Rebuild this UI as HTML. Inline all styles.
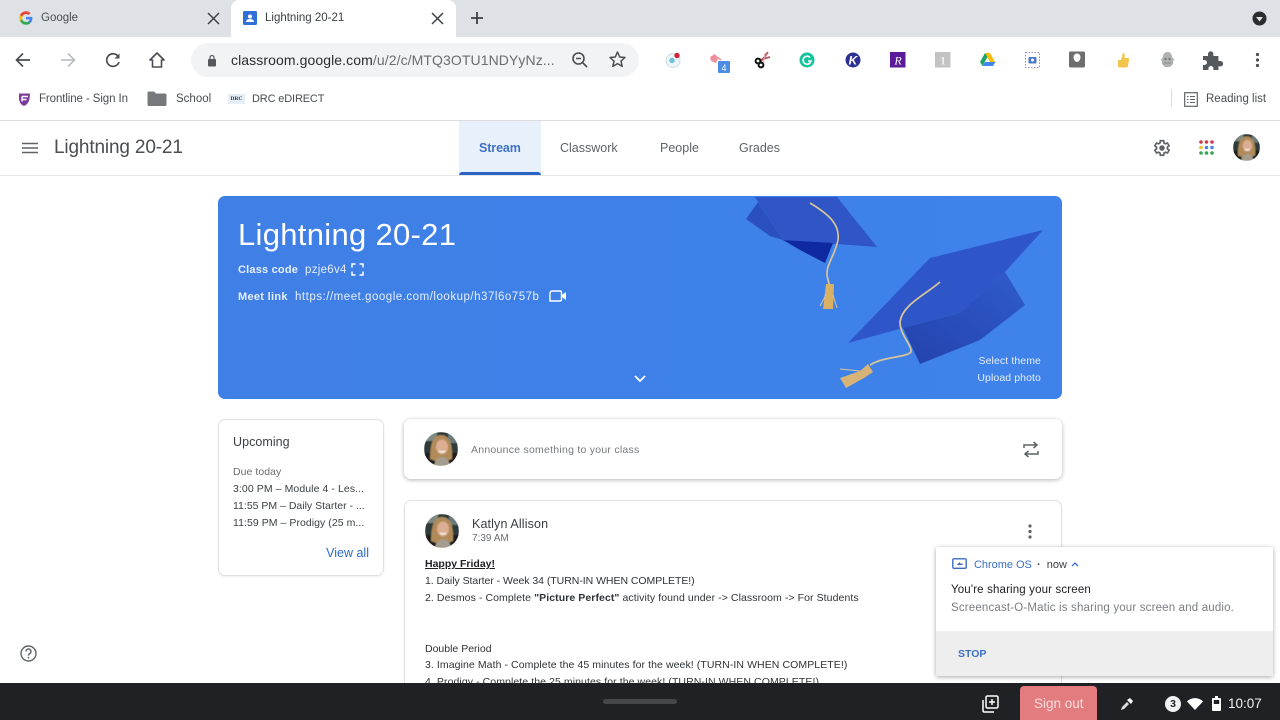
<!DOCTYPE html>
<html><head><meta charset="utf-8"><style>
html,body{margin:0;padding:0;width:1280px;height:720px;overflow:hidden;background:#fff;font-family:"Liberation Sans",sans-serif;color:#3c4043}
#root{position:absolute;left:0;top:0;width:1280px;height:720px;overflow:hidden;background:#fff}
.a{position:absolute;white-space:nowrap;line-height:1}
svg{position:absolute;overflow:visible}
</style></head><body><div id="root">
<svg width="0" height="0" style="position:absolute"><defs>
<filter id="bl"><feGaussianBlur stdDeviation=".6"/></filter>
<linearGradient id="flap" x1="0" y1="1" x2="1" y2="0"><stop offset="0" stop-color="#2342ac"/><stop offset="1" stop-color="#2f5ccb"/></linearGradient>
<symbol id="av" viewBox="0 0 34 34">
<clipPath id="cc"><circle cx="17" cy="17" r="17"/></clipPath>
<g clip-path="url(#cc)"><g filter="url(#bl)"><rect width="34" height="34" fill="#2f3a38"/><rect x="0" y="0" width="13" height="9" fill="#7c8a82"/><rect x="24" y="2" width="10" height="9" fill="#6b7a7c"/><rect x="0" y="21" width="34" height="13" fill="#1d1f1d"/>
<path d="M6 27C6 10 10 3 17 3s12 6 11 24l-5 2H11z" fill="#b08a58"/><ellipse cx="18" cy="15" rx="6" ry="7.500" fill="#dcae92"/><path d="M10 34c1-7 5-9 8-9s7 2 8 9z" fill="#a59c90"/><path d="M15 19q3 2 6 0" stroke="#fff" stroke-width="1.300" fill="none"/></g></g>
</symbol></defs></svg>

<!-- tab strip -->
<div class="a" style="left:0;top:0;width:1280px;height:37px;background:#dee1e6"></div>
<div class="a" style="left:231px;top:0;width:225px;height:38px;background:#fff;border-radius:8px 8px 0 0"></div>
<svg style="left:19px;top:11px" width="14" height="14" viewBox="0 0 24 24"><path d="M23 12.300c0-.8-.1-1.600-.2-2.300H12v4.400h6.200c-.3 1.400-1.100 2.600-2.300 3.400v2.800h3.700c2.200-2 3.400-5 3.400-8.300z" fill="#4285f4"/><path d="M12 23.500c3.100 0 5.700-1 7.600-2.800l-3.700-2.900c-1 .7-2.300 1.100-3.900 1.100-3 0-5.500-2-6.400-4.700H1.800v2.900c1.900 3.800 5.800 6.400 10.200 6.400z" fill="#34a853"/><path d="M5.600 14.200c-.5-1.400-.5-3 0-4.400V6.900H1.800c-1.600 3.200-1.600 7 0 10.200z" fill="#fbbc05"/><path d="M12 5.100c1.700 0 3.200.6 4.400 1.700l3.300-3.300C17.700 1.600 15.100.5 12 .5 7.600.5 3.700 3.100 1.800 6.900l3.800 2.900c.9-2.700 3.400-4.700 6.400-4.700z" fill="#ea4335"/></svg>
<div class="a" style="left:41px;top:13px;font-size:11.500px;color:#4a4d51">Google</div>
<svg style="left:207px;top:12px" width="13" height="13" viewBox="0 0 13 13"><path d="M1 1l11 11M12 1L1 12" stroke="#3c4043" stroke-width="1.500"/></svg>
<svg style="left:243px;top:11px" width="14" height="14" viewBox="0 0 14 14"><rect width="14" height="14" rx="1.500" fill="#2f6fd6"/><circle cx="7" cy="5.500" r="2" fill="#fff"/><path d="M3 11c0-2 2-3 4-3s4 1 4 3z" fill="#fff"/></svg>
<div class="a" style="left:265px;top:13px;font-size:11.500px;color:#3c4043">Lightning 20-21</div>
<svg style="left:431px;top:12px" width="13" height="13" viewBox="0 0 13 13"><path d="M1 1l11 11M12 1L1 12" stroke="#3c4043" stroke-width="1.500"/></svg>
<svg style="left:470px;top:11px" width="14" height="14" viewBox="0 0 14 14"><path d="M7 1v12M1 7h12" stroke="#3c4043" stroke-width="1.800"/></svg>
<svg style="left:1252px;top:11px" width="15" height="15" viewBox="0 0 15 15"><circle cx="7.500" cy="7.500" r="7" fill="#2a2c2e"/><path d="M4 6h7l-3.500 4.500z" fill="#dee1e6"/></svg>

<!-- toolbar -->
<svg style="left:14px;top:51px" width="18" height="18" viewBox="0 0 18 18"><path d="M16 9H3M9 2.500L2.500 9 9 15.500" stroke="#4a4d51" stroke-width="1.700" fill="none"/></svg>
<svg style="left:59px;top:51px" width="18" height="18" viewBox="0 0 18 18"><path d="M2 9h13M9 2.500L15.500 9 9 15.500" stroke="#b5b8bb" stroke-width="1.500" fill="none"/></svg>
<svg style="left:104px;top:51px" width="18" height="18" viewBox="0 0 18 18"><path d="M14.500 6A6.300 6.300 0 1 0 15 11" stroke="#4a4d51" stroke-width="1.700" fill="none"/><path d="M15.500 2.500v5h-5z" fill="#4a4d51"/></svg>
<svg style="left:148px;top:51px" width="18" height="18" viewBox="0 0 18 18"><path d="M9 2L2 9h2.500v7h9V9H16z" stroke="#4a4d51" stroke-width="1.600" fill="none" stroke-linejoin="round"/></svg>
<div class="a" style="left:191px;top:43px;width:448px;height:34px;background:#f1f3f4;border-radius:17px"></div>
<svg style="left:206px;top:54px" width="12" height="13" viewBox="0 0 12 13"><rect x="2" y="5" width="8" height="7.500" rx="1" fill="#55585c"/><path d="M4 5V3.500a2 2 0 0 1 4 0V5" stroke="#55585c" stroke-width="1.200" fill="none"/></svg>
<div class="a" style="left:231px;top:53px;font-size:14px;color:#2a2c2f;letter-spacing:.09px">classroom.google.com<span style="color:#6a6d71">/u/2/c/MTQ3OTU1NDYyNz...</span></div>
<svg style="left:571px;top:51px" width="18" height="18" viewBox="0 0 18 18"><circle cx="7.500" cy="7.500" r="5.500" stroke="#4a4d51" stroke-width="1.600" fill="none"/><path d="M11.500 11.500L16 16M5 7.500h5" stroke="#4a4d51" stroke-width="1.600"/></svg>
<svg style="left:608px;top:50px" width="19" height="19" viewBox="0 0 19 19"><path d="M9.500 2l2.200 5 5.300.5-4 3.600 1.200 5.300-4.700-2.800-4.700 2.800 1.200-5.300-4-3.600 5.300-.5z" stroke="#4a4d51" stroke-width="1.500" fill="none" stroke-linejoin="round"/></svg>

<!-- extensions -->
<svg style="left:664px;top:51px" width="18" height="18" viewBox="0 0 18 18"><circle cx="9" cy="9.500" r="7" fill="#eef5f8" stroke="#c8dce4"/><circle cx="8" cy="9.500" r="2.700" fill="#6fc2dc"/><circle cx="13" cy="4.500" r="2.700" fill="#d3203a"/></svg>
<svg style="left:709px;top:52px" width="22" height="22" viewBox="0 0 22 22"><path d="M1 5l5-3 3 4-2 5-5-2z" fill="#ef8f9d"/><path d="M8 5l4 3" stroke="#ef8f9d" stroke-width="1.500"/><rect x="9" y="9" width="12" height="12" rx="1" fill="#4c8ce5"/><text x="15" y="19" font-size="9" fill="#fff" text-anchor="middle" font-family="Liberation Sans">4</text></svg>
<svg style="left:754px;top:51px" width="18" height="18" viewBox="0 0 18 18"><path d="M14 1L6 12M16 6L5 9" stroke="#b3565e" stroke-width="1.800"/><path d="M11 2L9 16" stroke="#e8a5a8" stroke-width="1"/><circle cx="4" cy="10" r="2.400" stroke="#111" stroke-width="2" fill="none"/><circle cx="7" cy="14" r="2.400" stroke="#111" stroke-width="2" fill="none"/></svg>
<svg style="left:799px;top:52px" width="16" height="16" viewBox="0 0 16 16"><circle cx="8" cy="8" r="7.500" fill="#15c39a"/><path d="M11 5.500A4 4 0 1 0 12 9H9" stroke="#fff" stroke-width="1.600" fill="none"/></svg>
<svg style="left:845px;top:52px" width="16" height="16" viewBox="0 0 16 16"><circle cx="8" cy="8" r="7.500" fill="#2e3192"/><text x="8" y="12.500" font-size="12" font-weight="bold" font-style="italic" fill="#fff" text-anchor="middle" font-family="Liberation Sans">K</text></svg>
<svg style="left:890px;top:52px" width="16" height="16" viewBox="0 0 16 16"><rect width="15.500" height="15.500" fill="#5b1a9a"/><text x="8" y="12.500" font-size="12" font-style="italic" fill="#fff" text-anchor="middle" font-family="Liberation Serif">R</text></svg>
<svg style="left:935px;top:52px" width="16" height="16" viewBox="0 0 16 16"><rect width="15.500" height="15.500" fill="#c3c3c3"/><text x="8" y="12.500" font-size="12" font-weight="bold" fill="#eee" text-anchor="middle" font-family="Liberation Serif">1</text></svg>
<svg style="left:979px;top:52px" width="17" height="15" viewBox="0 0 17 15"><path d="M6 1h5l5 9h-5z" fill="#fbbc04"/><path d="M6 1L1 10l2.500 4 5-9z" fill="#1fa463"/><path d="M3.500 14h10.500l2.500-4H6z" fill="#4285f4"/></svg>
<svg style="left:1025px;top:52px" width="15" height="16" viewBox="0 0 15 16"><rect x=".5" y=".5" width="14" height="15" fill="#fff" stroke="#7b93c9" stroke-dasharray="1.500 1.500"/><rect x="3.500" y="5" width="8" height="6.500" rx="1" fill="#4d78c6"/><circle cx="7.500" cy="8" r="1.500" fill="#fff"/></svg>
<svg style="left:1069px;top:51px" width="17" height="17" viewBox="0 0 17 17"><rect y=".5" width="16" height="16" rx="1.500" fill="#6e6e6e"/><path d="M4.500 6a3.500 3.500 0 0 1 7 0c0 3-2 5-3.500 5S4.500 9 4.500 6z" fill="#fff"/></svg>
<svg style="left:1116px;top:52px" width="14" height="16" viewBox="0 0 14 16"><path d="M2 8h3l2-7c1.500 0 2 1 1.800 2.500L8.500 6H12c1 0 1.200 1 1 2l-1 6c-.2 1-.8 1.500-2 1.500H4c-1.500 0-2-.5-2-1.500z" fill="#f3c44b"/></svg>
<svg style="left:1159px;top:51px" width="17" height="17" viewBox="0 0 17 17"><path d="M8.500 1C5 1 4 4 4 6L1.500 9l1.500 1v3l3 3h5l3-3v-3l1.500-1L13 6c0-2-1-5-4.500-5z" fill="#b0b2b2"/><circle cx="6.500" cy="8" r="1.200" fill="#777"/><circle cx="10.500" cy="8" r="1.200" fill="#777"/><path d="M5 12h7" stroke="#888"/></svg>
<svg style="left:1202px;top:50px" width="21" height="20" viewBox="0 0 21 20"><path d="M1 6h5V4a2.700 2.700 0 0 1 5.400 0v2h5v5h2a2.700 2.700 0 0 1 0 5.400h-2V20h-5v-1.500a2.500 2.500 0 0 0-5 0V20H1v-5h1.500a2.500 2.500 0 0 0 0-5H1z" fill="#55585c"/></svg>
<svg style="left:1255px;top:52px" width="5" height="16" viewBox="0 0 5 16"><circle cx="2.500" cy="2.500" r="1.600" fill="#4a4d51"/><circle cx="2.500" cy="8" r="1.600" fill="#4a4d51"/><circle cx="2.500" cy="13.500" r="1.600" fill="#4a4d51"/></svg>

<!-- bookmarks -->
<svg style="left:17px;top:92px" width="15" height="15" viewBox="0 0 15 15"><path d="M2 1.500h11l-.5 5c-.5 4-3 6.500-5.500 7.500C4.500 13 2.500 11 2 7z" fill="#7c3b99"/><path d="M5 4.500h6M5 7.500h4.500M5 4.500v5" stroke="#fff" stroke-width="1.400"/></svg>
<div class="a" style="left:39px;top:94px;font-size:11.500px;color:#4a4d51;letter-spacing:-.1px">Frontline - Sign In</div>
<svg style="left:147px;top:91px" width="20" height="16" viewBox="0 0 20 16"><path d="M.5 2c0-.8.5-1.500 1.500-1.500h5l2 2h9c1 0 1.500.7 1.500 1.500v9.500c0 1-.5 1.500-1.500 1.500H2c-1 0-1.500-.5-1.500-1.500z" fill="#76787b"/></svg>
<div class="a" style="left:176px;top:94px;font-size:11.500px;color:#4a4d51">School</div>
<div class="a" style="left:228px;top:94px;width:17px;height:10px;background:#e5edf4;font:bold 5.500px/10px 'Liberation Serif',serif;color:#334;text-align:center">DRC</div>
<div class="a" style="left:252px;top:94px;font-size:11px;color:#4a4d51;letter-spacing:-.15px">DRC eDIRECT</div>
<div class="a" style="left:1171px;top:89px;width:1px;height:18px;background:#dadce0"></div>
<svg style="left:1184px;top:92px" width="14" height="15" viewBox="0 0 14 15"><rect x=".7" y=".7" width="12.600" height="13.600" fill="none" stroke="#5f6368" stroke-width="1.200"/><path d="M3 4.500h1.500M6 4.500h5M3 7.500h1.500M6 7.500h5M3 10.500h1.500M6 10.500h5" stroke="#5f6368"/></svg>
<div class="a" style="left:1206px;top:94px;font-size:11.500px;color:#4a4d51">Reading list</div>
<div class="a" style="left:0;top:120px;width:1280px;height:1px;background:#dadce0"></div>

<!-- classroom header -->
<svg style="left:22px;top:142px" width="16" height="12" viewBox="0 0 16 12"><path d="M0 1.500h16M0 6h16M0 10.500h16" stroke="#5f6368" stroke-width="1.500"/></svg>
<div class="a" style="left:54px;top:138px;font-size:19px;letter-spacing:-.15px;color:#4a4d51">Lightning 20-21</div>
<div class="a" style="left:459px;top:121px;width:82px;height:54px;background:#e8f0fb"></div>
<div class="a" style="left:459px;top:172px;width:82px;height:3px;background:#2b63c4;border-radius:3px 3px 0 0"></div>
<div class="a" style="left:479px;top:142px;font-size:12.500px;font-weight:bold;letter-spacing:-.1px;color:#3f72c4">Stream</div>
<div class="a" style="left:560px;top:142px;font-size:12.500px;color:#5f6368">Classwork</div>
<div class="a" style="left:660px;top:142px;font-size:12.500px;color:#5f6368">People</div>
<div class="a" style="left:739px;top:142px;font-size:12.500px;color:#5f6368">Grades</div>
<div class="a" style="left:0;top:175px;width:1280px;height:1px;background:#e3e5e8"></div>
<svg style="left:1152px;top:138px" width="20" height="20" viewBox="0 0 24 24"><path d="M19.400 13a7.600 7.600 0 0 0 0-2l2.100-1.600-2-3.400-2.500 1a7.500 7.500 0 0 0-1.700-1L15 3.300h-4L10.600 6a7.500 7.500 0 0 0-1.700 1l-2.500-1-2 3.400L6.500 11a7.600 7.600 0 0 0 0 2l-2.100 1.600 2 3.400 2.500-1a7.500 7.500 0 0 0 1.700 1l.4 2.700h4l.4-2.700a7.500 7.500 0 0 0 1.700-1l2.500 1 2-3.400z" transform="translate(-1)" fill="none" stroke="#5f6368" stroke-width="2"/><circle cx="12" cy="12" r="3.300" fill="#5f6368"/></svg>
<svg style="left:1199px;top:140px" width="15" height="15" viewBox="0 0 15 15"><g><circle cx="2" cy="2" r="1.800" fill="#d0394a"/><circle cx="7.500" cy="2" r="1.800" fill="#d0394a"/><circle cx="13" cy="2" r="1.800" fill="#d0394a"/><circle cx="2" cy="7.500" r="1.800" fill="#f4bd2e"/><circle cx="7.500" cy="7.500" r="1.800" fill="#4a86e0"/><circle cx="13" cy="7.500" r="1.800" fill="#4a86e0"/><circle cx="2" cy="13" r="1.800" fill="#34a853"/><circle cx="7.500" cy="13" r="1.800" fill="#34a853"/><circle cx="13" cy="13" r="1.800" fill="#34a853"/></g></svg>
<svg style="left:1233px;top:134px" width="27" height="27"><use href="#av" width="27" height="27"/></svg>

<!-- banner -->
<div class="a" style="left:218px;top:196px;width:844px;height:203px;background:linear-gradient(90deg,#3f7fe6,#3e82ea);border-radius:7px;overflow:hidden"></div>
<svg style="left:0;top:0" width="1280" height="720" viewBox="0 0 1280 720">
<polygon points="746,219 758,202 783,240 770,236" fill="#2a50bf"/>
<polygon points="755,197 837,197 877,247 783,240" fill="#2f55c6"/>
<polygon points="783,240 833,243 825,263 800,250" fill="#0f2aa0"/>
<polygon points="930,258 1043,230 1005,272 960,313 903,328 848,343" fill="#2f56c8"/>
<polygon points="1005,272 1025,305 980,340 920,364 903,328 960,313" fill="url(#flap)"/>
<path d="M810 203C830 215 840 225 838 240 835 255 826 265 827 275 828 283 832 290 832 295" stroke="#d8c498" stroke-width="1.700" fill="none"/>
<polygon points="826,284 834,284 833,309 823,309" fill="#d9b066"/>
<path d="M826 295L820 306M833 295L837 308" stroke="#d9c69c" fill="none"/>
<path d="M940 282C925 295 902 305 900 322 900 335 912 345 911 352 905 358 885 356 870 365" stroke="#d8c498" stroke-width="1.800" fill="none"/>
<polygon points="840,378 860,371 868,364 873,372 864,378 846,388" fill="#d7b378"/>
<path d="M840 369L860 371" stroke="#d9c69c" fill="none"/>
</svg>
<div class="a" style="left:238px;top:219px;font-size:31px;color:#fff;letter-spacing:.3px">Lightning 20-21</div>
<div class="a" style="left:238px;top:265px;font-size:11px;font-weight:bold;color:#e6eefc;letter-spacing:.2px">Class code</div>
<div class="a" style="left:305px;top:265px;font-size:11.500px;color:#e6eefc;letter-spacing:.3px">pzje6v4</div>
<svg style="left:351px;top:263px" width="13" height="13" viewBox="0 0 13 13"><path d="M1 4.500V1h3.500M8.500 1H12v3.500M12 8.500V12H8.500M4.500 12H1V8.500" stroke="#fff" stroke-width="1.500" fill="none"/></svg>
<div class="a" style="left:238px;top:292px;font-size:11px;font-weight:bold;color:#e6eefc;letter-spacing:.3px">Meet link</div>
<div class="a" style="left:295px;top:292px;font-size:11.500px;color:#e6eefc;letter-spacing:.52px">https://meet.google.com/lookup/h37l6o757b</div>
<svg style="left:549px;top:290px" width="18" height="12" viewBox="0 0 18 12"><path d="M3 1h8c1 0 1.500.5 1.500 1.500v7c0 1-.5 1.500-1.500 1.500H1V3c0-1 1-2 2-2z" stroke="#fff" stroke-width="1.400" fill="none"/><path d="M13 5l4-3v8l-4-3z" fill="#fff"/></svg>
<svg style="left:634px;top:375px" width="12" height="8" viewBox="0 0 12 8"><path d="M1 1l5 5 5-5" stroke="#fff" stroke-width="1.800" fill="none"/></svg>
<div class="a" style="right:239px;top:356px;font-size:10.500px;letter-spacing:.1px;color:#e6eefc">Select theme</div>
<div class="a" style="right:239px;top:373px;font-size:10.500px;letter-spacing:.1px;color:#e6eefc">Upload photo</div>

<!-- upcoming -->
<div class="a" style="left:218px;top:419px;width:164px;height:155px;border:1px solid #e0e2e5;border-radius:7px;box-shadow:0 1px 2px rgba(0,0,0,.08)"></div>
<div class="a" style="left:233px;top:436px;font-size:12.500px;letter-spacing:.05px;color:#3c4043">Upcoming</div>
<div class="a" style="left:233px;top:467px;font-size:10.500px;letter-spacing:.05px;color:#6a6d71">Due today</div>
<div class="a" style="left:233px;top:484px;font-size:10.500px;letter-spacing:.08px;color:#3c4043">3:00 PM – Module 4 - Les...</div>
<div class="a" style="left:233px;top:501px;font-size:10.500px;color:#3c4043">11:55 PM – Daily Starter - ...</div>
<div class="a" style="left:233px;top:518px;font-size:10.500px;letter-spacing:.05px;color:#3c4043">11:59 PM – Prodigy (25 m...</div>
<div class="a" style="right:911px;top:547px;font-size:12.500px;color:#2b6ccb">View all</div>

<!-- announce -->
<div class="a" style="left:404px;top:419px;width:658px;height:60px;background:#fff;border-radius:7px;box-shadow:0 1px 4px rgba(60,64,67,.4)"></div>
<svg style="left:424px;top:432px" width="34" height="34"><use href="#av" width="34" height="34"/></svg>
<div class="a" style="left:471px;top:445px;font-size:10.500px;letter-spacing:.25px;color:#777a7e">Announce something to your class</div>
<svg style="left:1023px;top:441px" width="16" height="17" viewBox="0 0 16 17"><path d="M1 7V4h12M10.500 1L14 4l-3.500 3M15 10v3H3M5.500 10L2 13l3.500 3" stroke="#5f6368" stroke-width="1.500" fill="none"/></svg>

<!-- post -->
<div class="a" style="left:404px;top:500px;width:656px;height:200px;border:1px solid #e0e2e5;border-radius:7px;box-shadow:0 1px 2px rgba(0,0,0,.08)"></div>
<svg style="left:425px;top:514px" width="34" height="34"><use href="#av" width="34" height="34"/></svg>
<div class="a" style="left:472px;top:518px;font-size:12.500px;letter-spacing:.13px;color:#3c4043">Katlyn Allison</div>
<div class="a" style="left:472px;top:534px;font-size:10px;color:#6a6d71">7:39 AM</div>
<svg style="left:1027px;top:524px" width="6" height="15" viewBox="0 0 6 15"><circle cx="3" cy="2" r="1.600" fill="#5f6368"/><circle cx="3" cy="7.500" r="1.600" fill="#5f6368"/><circle cx="3" cy="13" r="1.600" fill="#5f6368"/></svg>
<div class="a" style="left:425px;top:559px;font-size:10.500px;font-weight:bold;color:#202124;text-decoration:underline">Happy Friday!</div>
<div class="a" style="left:425px;top:576px;font-size:10.500px;letter-spacing:-.04px;color:#2f3236">1. Daily Starter - Week 34 (TURN-IN WHEN COMPLETE!)</div>
<div class="a" style="left:425px;top:593px;font-size:10.500px;letter-spacing:.08px;color:#2f3236">2. Desmos - Complete <b>"Picture Perfect"</b> activity found under -&gt; Classroom -&gt; For Students</div>
<div class="a" style="left:425px;top:644px;font-size:10.500px;color:#2f3236">Double Period</div>
<div class="a" style="left:425px;top:660px;font-size:10.500px;letter-spacing:.08px;color:#2f3236">3. Imagine Math - Complete the 45 minutes for the week! (TURN-IN WHEN COMPLETE!)</div>
<div class="a" style="left:425px;top:677px;font-size:10.500px;letter-spacing:.08px;color:#2f3236">4. Prodigy - Complete the 25 minutes for the week! (TURN-IN WHEN COMPLETE!)</div>

<svg style="left:20px;top:645px" width="17" height="17" viewBox="0 0 17 17"><circle cx="8.500" cy="8.500" r="7.500" stroke="#5f6368" stroke-width="1.400" fill="none"/><path d="M6 6.500a2.500 2.500 0 1 1 3.800 2.100c-.8.5-1.300 1-1.300 2" stroke="#5f6368" stroke-width="1.400" fill="none"/><circle cx="8.500" cy="12.700" r=".9" fill="#5f6368"/></svg>

<!-- shelf -->
<div class="a" style="left:0;top:683px;width:1280px;height:37px;background:#202124"></div>
<div class="a" style="left:603px;top:699px;width:74px;height:5px;background:#45474a;border-radius:3px"></div>
<svg style="left:981px;top:695px" width="18" height="18" viewBox="0 0 18 18"><rect x="5" y="1" width="12" height="12" rx="1.500" fill="none" stroke="#fff" stroke-width="1.500"/><path d="M11 4v6M8 7h6" stroke="#fff" stroke-width="1.500"/><path d="M2 5v10.500c0 .8.500 1.500 1.500 1.500H13" fill="none" stroke="#fff" stroke-width="1.500"/></svg>
<div class="a" style="left:1020px;top:686px;width:77px;height:34px;background:#e27c7f;border-radius:4px 4px 0 0"></div>
<div class="a" style="left:1034px;top:697px;font-size:13.500px;color:#f9dcdc">Sign out</div>
<svg style="left:1120px;top:697px" width="14" height="14" viewBox="0 0 14 14"><path d="M1 13l1-3 5-5 2 2-5 5z" fill="#ddd"/><path d="M7 3l4 4 2-3-3-3z" fill="#fff"/></svg>
<div class="a" style="left:1165px;top:696px;width:16px;height:16px;border-radius:50%;background:#f1f3f4;color:#202124;font-size:10.500px;font-weight:bold;line-height:16px;text-align:center">3</div>
<svg style="left:1187px;top:698px" width="16" height="12" viewBox="0 0 16 12"><path d="M0 3.500C4-1 12-1 16 3.500L8 12z" fill="#fff"/></svg>
<svg style="left:1212px;top:696px" width="9" height="15" viewBox="0 0 9 15"><path d="M3 0h3v2h2c.6 0 1 .4 1 1v11c0 .6-.4 1-1 1H1c-.6 0-1-.4-1-1V3c0-.6.4-1 1-1h2z" fill="#fff"/><rect x="1.800" y="4" width="5.400" height="4" fill="#202124"/></svg>
<div class="a" style="left:1228px;top:697px;font-size:13.500px;color:#f1f3f4">10:07</div>

<!-- notification -->
<div class="a" style="left:936px;top:547px;width:337px;height:129px;background:#fff;border-radius:2px;box-shadow:0 1px 5px rgba(0,0,0,.35);overflow:hidden"></div>
<div class="a" style="left:936px;top:631px;width:337px;height:45px;background:#eeeeee"></div>
<svg style="left:952px;top:557px" width="15" height="13" viewBox="0 0 15 13"><rect x=".8" y="1.800" width="13.400" height="9.500" rx="1.200" fill="none" stroke="#3a6fc4" stroke-width="1.400"/><path d="M5 7.500l3-2.500v1.500h2.500V8H5z" fill="#3a6fc4"/></svg>
<div class="a" style="left:974px;top:560px;font-size:11px;letter-spacing:-.03px;color:#3a6fc4">Chrome OS</div>
<div class="a" style="left:1037px;top:560px;font-size:11px;color:#3c4043"><b>·</b>&nbsp; now</div>
<svg style="left:1071px;top:562px" width="8" height="5" viewBox="0 0 8 5"><path d="M1 4l3-3 3 3" stroke="#3a6fc4" stroke-width="1.300" fill="none"/></svg>
<div class="a" style="left:951px;top:585px;font-size:11.500px;letter-spacing:.15px;color:#202124">You're sharing your screen</div>
<div class="a" style="left:951px;top:603px;font-size:11.500px;letter-spacing:.17px;color:#7b7e82">Screencast-O-Matic is sharing your screen and audio.</div>
<div class="a" style="left:958px;top:649px;font-size:10.500px;font-weight:bold;color:#3a6fc4">STOP</div>
</div></body></html>
